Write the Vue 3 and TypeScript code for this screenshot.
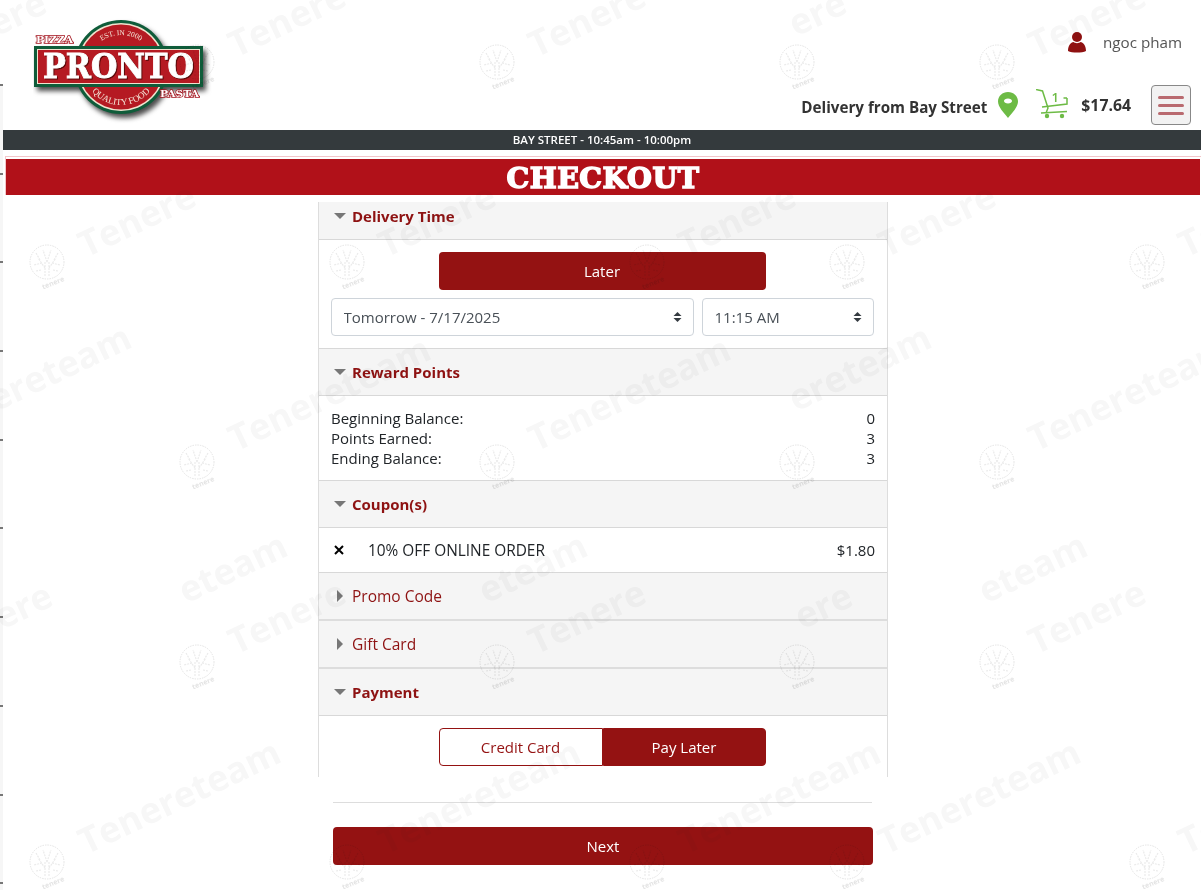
<template>
<div class="page">
    <header class="top">
        <svg class="logo" viewBox="0 0 182 106" width="182" height="106">
            <defs>
                <path id="arcTop" d="M53 52 A35 35 0 0 1 123 52" />
                <path id="arcBottom" d="M50 49 A38 38 0 0 0 126 49" />
            </defs>
            <g class="logo-art">
                <circle cx="88" cy="49" r="47" fill="#0f5c3a" />
                <circle cx="88" cy="49" r="44" fill="#f1e3cf" />
                <circle cx="88" cy="49" r="42.500" fill="#b51a22" />
                <rect x="1" y="28" width="169" height="41" fill="#0f5c3a" />
                <rect x="4" y="31" width="163" height="35" fill="#f1e3cf" />
                <rect x="5" y="32" width="161" height="33" fill="#b51a22" />
            </g>
            <text class="logo-tag" x="3" y="25" textLength="37" lengthAdjust="spacingAndGlyphs">PIZZA</text>
            <text class="logo-tag" x="127" y="79" textLength="39" lengthAdjust="spacingAndGlyphs">PASTA</text>
            <text class="logo-small"><textPath href="#arcTop" startOffset="50%">EST. IN 2000</textPath></text>
            <text class="logo-small low"><textPath href="#arcBottom" startOffset="50%">QUALITY FOOD</textPath></text>
            <text class="logo-name" x="85.500" y="60" textLength="151" lengthAdjust="spacingAndGlyphs">PRONTO</text>
        </svg>
        <div class="top-right">
            <div class="user-row">
                <svg class="user-icon" viewBox="0 0 20 22" width="20" height="22">
                    <circle cx="10" cy="6" r="5" fill="#8f1111" />
                    <path d="M1 20 C1 14 4 11.500 6.500 11 C8 12.500 12 12.500 13.500 11 C16 11.500 19 14 19 20 C15 22 5 22 1 20 Z" fill="#8f1111" />
                </svg>
                <span class="user-name">ngoc pham</span>
            </div>
            <div class="order-row">
                <span class="delivery">Delivery from Bay Street</span>
                <svg class="pin" viewBox="0 0 20 26" width="20" height="26">
                    <path fill-rule="evenodd" d="M10 0 C15.500 0 20 4 20 9.500 C20 15 14 21 10 26 C6 21 0 15 0 9.500 C0 4 4.500 0 10 0 Z M10 6.500 C7.800 6.500 6 7.700 6 9 C6 10.300 7.800 11.500 10 11.500 C12.200 11.500 14 10.300 14 9 C14 7.700 12.200 6.500 10 6.500 Z" fill="#6dbb45" />
                </svg>
                <svg class="cart" viewBox="0 0 33 30" width="33" height="30">
                    <path d="M0 .5 L6.500 2 L12 19 L10 24" fill="none" stroke="#6dbb45" stroke-width="1.500" />
                    <path d="M6 18 L31 15 L31 9 M27.500 9 L31 9" fill="none" stroke="#6dbb45" stroke-width="1.500" />
                    <path d="M5 24 L31 22.500" fill="none" stroke="#6dbb45" stroke-width="1.500" />
                    <circle cx="11" cy="27" r="2.200" fill="#6dbb45" />
                    <circle cx="26" cy="27" r="2.200" fill="#6dbb45" />
                    <text class="cart-count" x="15.500" y="13">1</text>
                </svg>
                <span class="total">$17.64</span>
                <button class="menu-btn" type="button" aria-label="menu">
                    <i></i><i></i><i></i>
                </button>
            </div>
        </div>
    </header>

    <div class="store-bar">BAY STREET - 10:45am - 10:00pm</div>

    <div class="title-wrap">
        <h1 class="title">CHECKOUT</h1>
    </div>

    <main class="checkout">
        <section class="panel">
            <div class="sec-head first">
                <span class="arrow down"></span><span class="sec-title">Delivery Time</span>
            </div>
            <div class="sec-body time-body">
                <button class="btn later" type="button">Later</button>
                <div class="select-row">
                    <select class="sel sel-day">
                        <option>Tomorrow - 7/17/2025</option>
                    </select>
                    <select class="sel sel-time">
                        <option>11:15 AM</option>
                    </select>
                </div>
            </div>

            <div class="sec-head">
                <span class="arrow down"></span><span class="sec-title">Reward Points</span>
            </div>
            <div class="sec-body points-body">
                <div class="line" v-for="row in points" :key="row.label">
                    <span>{{ row.label }}</span><span>{{ row.value }}</span>
                </div>
            </div>

            <div class="sec-head">
                <span class="arrow down"></span><span class="sec-title">Coupon(s)</span>
            </div>
            <div class="coupon-row">
                <svg class="remove" viewBox="0 0 10 10" width="10" height="10">
                    <path d="M1 1 L9 9 M9 1 L1 9" stroke="#000" stroke-width="2" />
                </svg>
                <span class="coupon-name">10% OFF ONLINE ORDER</span>
                <span>$1.80</span>
            </div>

            <div class="sec-head closed">
                <span class="arrow right"></span><span class="sec-title light">Promo Code</span>
            </div>
            <div class="sec-head closed">
                <span class="arrow right"></span><span class="sec-title light">Gift Card</span>
            </div>
            <div class="sec-head">
                <span class="arrow down"></span><span class="sec-title">Payment</span>
            </div>
            <div class="pay-body">
                <div class="pay-group">
                    <button class="pay-opt" type="button">Credit Card</button>
                    <button class="pay-opt active" type="button">Pay Later</button>
                </div>
            </div>
        </section>

        <div class="footer-area">
            <hr class="rule" />
            <button class="btn next" type="button">Next</button>
        </div>
    </main>

    <!-- watermark over the whole page -->
    <svg class="watermark" width="1201" height="890" viewBox="0 0 1201 890">
        <text v-for="(w, i) in wordMarks" :key="'w' + i" class="wm-word" :transform="`translate(${w.x + 6} ${w.y}) rotate(-25.400)`">{{ w.text }}</text>
        <g v-for="(s, i) in seals" :key="'s' + i" :transform="`translate(${s.x} ${s.y})`">
            <circle r="17" fill="none" stroke="#e2e2e2" stroke-width="1" stroke-dasharray="1.500 1" />
            <path d="M-2 14 L-2 0 M2 14 L2 0 M-2 6 L-9 -4 M2 6 L9 -4 M-5 1 L-13 3 M5 1 L13 3 M0 0 L-4 -12 M0 0 L4 -12 M-7 -2 L-11 -9 M7 -2 L11 -9 M-6 8 L-11 9 M6 8 L11 9" fill="none" stroke="#ebebeb" stroke-width="1.200" stroke-dasharray="2 1" />
            <text class="wm-seal" x="-4" y="26" transform="rotate(-22 0 26)">tenere</text>
        </g>
    </svg>
</div>
</template>

<script setup lang="ts">
interface pointRow {
    label: string,
    value: number
}

const points: pointRow[] = [
    { label: 'Beginning Balance:', value: 0 },
    { label: 'Points Earned:', value: 3 },
    { label: 'Ending Balance:', value: 3 },
]

const at = (xs: number[], y: number) => xs.map(x => ({ x, y }))
const words = (text: string, xs: number[], y: number) => xs.map(x => ({ x, y, text }))

const rowA = [197, 497, 797, 997]
const rowB = [47, 347, 647, 847, 1147]

const seals = [
    ...at(rowA, 62),
    ...at(rowB, 262),
    ...at(rowA, 462),
    ...at(rowA, 662),
    ...at(rowB, 862),
]

const wordMarks = [
    ...words('ere', [-10, 790], 37),
    ...words('Tenere', [230, 530, 1030], 58),
    ...words('Tenere', [80, 380, 680, 880, 1180], 258),
    ...words('ereteam', [-10, 790], 412),
    ...words('Tenereteam', [230, 530, 1030], 452),
    ...words('eteam', [180, 480, 980], 604),
    ...words('ere', [-4, 796], 630),
    ...words('Tenere', [230, 530, 1030], 655),
    ...words('Tenereteam', [80, 380, 680, 880, 1180], 855),
]
</script>

<style>
html, body {
    margin: 0;
    background: #fff;
}
</style>

<style scoped>
.page {
    position: relative;
    height: 890px;
    overflow: hidden;
    box-sizing: border-box;
    padding-left: 3px;
    font-family: "Open Sans", "Noto Sans", sans-serif;
    font-size: 15px;
    color: #212529;
    background: repeating-linear-gradient(#777 0 2px, #f6f6f6 2px 88.700px) no-repeat 0 84px / 3px 100%, #fff;
}

.top {
    height: 130px;
    display: flex;
    justify-content: space-between;
}

.logo {
    margin: 18px 0 0 30px;
}

.logo-art {
    filter: drop-shadow(3px 4px 2.500px rgba(0, 0, 0, .7));
}

.logo-tag {
    font-family: "DejaVu Serif", serif;
    font-weight: bold;
    font-size: 9px;
    fill: #fff;
    stroke: #a3121c;
    stroke-width: 1.400px;
    paint-order: stroke;
}

.logo-small {
    font-family: "Liberation Serif", serif;
    font-size: 7.500px;
    fill: #f5e6d8;
    text-anchor: middle;
}

.logo-small.low {
    font-size: 9px;
}

.logo-name {
    font-family: "DejaVu Serif", serif;
    font-weight: bold;
    font-size: 34px;
    fill: #fff;
    stroke: #fff;
    stroke-width: .9px;
    text-anchor: middle;
    filter: drop-shadow(1px 1px 0 #5a0a0a);
}

.top-right {
    display: flex;
    flex-direction: column;
    align-items: flex-end;
    padding-right: 10px;
}

.user-row {
    display: flex;
    align-items: center;
    margin-top: 31px;
    padding-right: 9px;
}

.user-icon {
    margin-right: 16px;
}

.user-name {
    font-size: 15.200px;
    color: #555;
}

.order-row {
    display: flex;
    align-items: center;
    margin-top: 32px;
    height: 40px;
}

.delivery {
    font-weight: 700;
    font-size: 15.200px;
    color: #333;
    margin: 4px 11px 0 0;
}

.pin {
    margin: 0 18px 0 0;
}

.cart {
    margin: -2px 12px 0 0;
}

.cart-count {
    font-size: 13px;
    font-weight: 600;
    fill: #6dbb45;
}

.total {
    font-weight: 700;
    font-size: 15.800px;
    color: #333;
    margin-right: 20px;
}

.menu-btn {
    width: 40px;
    height: 40px;
    box-sizing: border-box;
    border: 1px solid #888;
    border-radius: 4px;
    background: #f2f2f2;
    padding: 0 6px;
    display: flex;
    flex-direction: column;
    justify-content: center;
    gap: 5px;
}

.menu-btn i {
    display: block;
    height: 3px;
    border-radius: 2px;
    background: #b96a6f;
}

.store-bar {
    height: 20px;
    line-height: 20px;
    background: #343a3d;
    color: #fff;
    text-align: center;
    font-size: 11.500px;
    font-weight: 600;
}

.title-wrap {
    margin: 6px 0 0 2px;
    padding: 2px 0 0;
    border-top: 1px solid #f3c6ca;
    border-left: 1px solid #f3c6ca;
}

.title {
    margin: 0 1px 0 0;
    height: 36px;
    line-height: 38px;
    background: #b11119;
    color: #fff;
    text-align: center;
    font-family: "DejaVu Serif", serif;
    font-weight: bold;
    font-size: 28.500px;
    letter-spacing: .5px;
    -webkit-text-stroke: 1.500px #fff;
}

.checkout {
    width: 570px;
    margin: 7px 0 0 315px;
}

.panel {
    border-left: 1px solid #ddd;
    border-right: 1px solid #ddd;
    height: 575px;
    box-sizing: border-box;
}

.sec-head {
    height: 47px;
    box-sizing: border-box;
    background: #f5f5f5;
    border-bottom: 1px solid #d8d8d8;
    display: flex;
    align-items: center;
    padding-left: 15px;
}

.sec-head.first {
    height: 38px;
    padding-bottom: 10px;
}

.sec-head.closed {
    height: 48px;
    border-bottom: 2px solid #ddd;
}

.arrow {
    width: 0;
    height: 0;
}

.arrow.down {
    width: 12px;
    border-left: 6px solid transparent;
    border-right: 6px solid transparent;
    border-top: 6px solid #777;
    box-sizing: border-box;
    margin-right: 6px;
}

.arrow.right {
    margin-left: 3px;
    margin-right: 9px;
    border-top: 6px solid transparent;
    border-bottom: 6px solid transparent;
    border-left: 6px solid #777;
}

.sec-title {
    font-weight: 700;
    font-size: 15px;
    color: #8e1212;
}

.sec-title.light {
    font-weight: 400;
    font-size: 15.500px;
}

.sec-body {
    box-sizing: border-box;
    border-bottom: 1px solid #d8d8d8;
}

.time-body {
    height: 109px;
    padding: 12px 2px 0 0;
    display: flex;
    flex-direction: column;
    align-items: center;
}

.btn {
    display: block;
    height: 38px;
    border: 0;
    border-radius: 4px;
    background: #941212;
    color: #fff;
    font: inherit;
}

.later {
    width: 327px;
}

.select-row {
    display: flex;
    gap: 8px;
    margin-top: 8px;
}

.sel {
    height: 38px;
    box-sizing: border-box;
    border: 1px solid #ced4da;
    border-radius: 4px;
    padding: 0 12px;
    font: inherit;
    color: #495057;
    appearance: none;
    background: #fff url("data:image/svg+xml,%3Csvg xmlns='http://www.w3.org/2000/svg' width='9' height='12'%3E%3Cpath d='M4.500 1 L8.500 5 H.5 Z M4.500 11 L8.500 7 H.5 Z' fill='%23343a40'/%3E%3C/svg%3E") no-repeat right 11px center;
}

.sel-day {
    width: 363px;
}

.sel-time {
    width: 172px;
}

.points-body {
    height: 85px;
    padding: 12px 12px 0;
    line-height: 20px;
}

.line {
    display: flex;
    justify-content: space-between;
}

.coupon-row {
    height: 45px;
    box-sizing: border-box;
    border-bottom: 1px solid #d8d8d8;
    display: flex;
    align-items: center;
    padding: 0 12px 0 15px;
}

.remove {
    margin-right: 24px;
}

.coupon-name {
    flex: 1;
    font-size: 15.400px;
}

.pay-body {
    padding: 12px 2px 0 0;
    display: flex;
    justify-content: center;
}

.pay-group {
    display: flex;
    width: 327px;
    height: 38px;
}

.pay-opt {
    width: 164px;
    box-sizing: border-box;
    border: 1px solid #941212;
    background: #fff;
    color: #941212;
    font: inherit;
    border-radius: 4px 0 0 4px;
}

.pay-opt.active {
    width: 163px;
    background: #941212;
    color: #fff;
    border-radius: 0 4px 4px 0;
}

.footer-area {
    padding: 25px 0 0 15px;
}

.rule {
    width: 539px;
    margin: 0 0 24px;
    border: 0;
    border-top: 1px solid #ddd;
}

.next {
    width: 540px;
}

.watermark {
    position: absolute;
    left: 0;
    top: 0;
    pointer-events: none;
    mix-blend-mode: multiply;
}

.wm-word {
    font-family: "Open Sans", sans-serif;
    font-size: 36px;
    font-weight: 700;
    fill: #f7f7f7;
}

.wm-seal {
    font-family: "Open Sans", sans-serif;
    font-size: 7px;
    font-weight: 700;
    fill: #e4e4e4;
}
</style>
